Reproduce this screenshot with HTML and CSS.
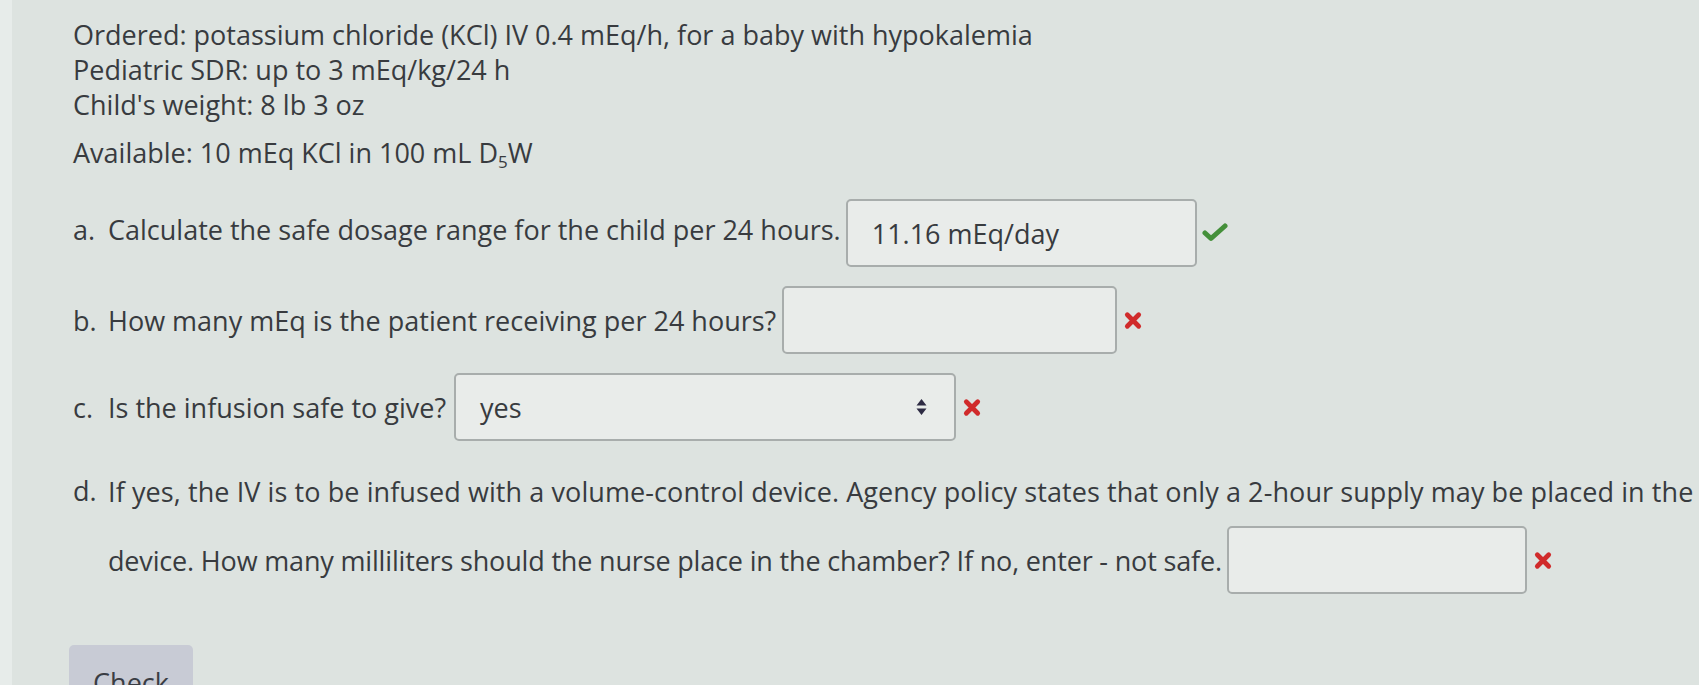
FILE: index.html
```html
<!DOCTYPE html>
<html>
<head>
<meta charset="utf-8">
<link rel="stylesheet" href="styles.css">
</head>
<body>
<div class="page">
  <div class="given">
    <p class="line">Ordered: potassium chloride (KCl) IV 0.4 mEq/h, for a baby with hypokalemia</p>
    <p class="line">Pediatric SDR: up to 3 mEq/kg/24 h</p>
    <p class="line">Child's weight: 8 lb 3 oz</p>
    <p class="line last">Available: 10 mEq KCl in 100 mL D<sub>5</sub>W</p>
  </div>
  <div class="questions">
    <div class="q qa">
      <span class="marker">a.</span>
      <span class="qtext">Calculate the safe dosage range for the child per 24 hours.</span>
      <span class="field fa">11.16 mEq/day</span>
      <svg class="icon ok" viewBox="0 0 26 20" width="26" height="20"><path d="M3 11 L9 16.5 L23 4" fill="none" stroke="#44903a" stroke-width="5" stroke-linejoin="round" stroke-linecap="round"/></svg>
    </div>
    <div class="q qb">
      <span class="marker">b.</span>
      <span class="qtext">How many mEq is the patient receiving per 24 hours?</span>
      <span class="field fb"></span>
      <svg class="icon bad" viewBox="0 0 20 20" width="20" height="19"><path d="M4 4 L16 16 M16 4 L4 16" stroke="#d02b2b" stroke-width="5" stroke-linecap="round"/></svg>
    </div>
    <div class="q qc">
      <span class="marker">c.</span>
      <span class="qtext">Is the infusion safe to give?</span>
      <span class="field select">yes
        <svg class="updown" viewBox="0 0 11 18" width="11" height="18"><path d="M5.5 1 L10.5 7.5 L0.5 7.5 Z M5.5 17 L10.5 10.5 L0.5 10.5 Z" fill="#2e2c44"/></svg>
      </span>
      <svg class="icon bad" viewBox="0 0 20 20" width="20" height="19"><path d="M4 4 L16 16 M16 4 L4 16" stroke="#d02b2b" stroke-width="5" stroke-linecap="round"/></svg>
    </div>
    <div class="q qd">
      <span class="marker">d.</span>
      <div class="dbody">
        <p class="dline1">If yes, the IV is to be infused with a volume-control device. Agency policy states that only a 2-hour supply may be placed in the</p>
        <div class="dline2">
          <span class="qtext">device. How many milliliters should the nurse place in the chamber? If no, enter - not safe.</span>
          <span class="field fd"></span>
          <svg class="icon bad" viewBox="0 0 20 20" width="20" height="19"><path d="M4 4 L16 16 M16 4 L4 16" stroke="#d02b2b" stroke-width="5" stroke-linecap="round"/></svg>
        </div>
      </div>
    </div>
  </div>
  <button class="check">Check</button>
</div>
</body>
</html>
```
FILE: styles.css
```css
html, body {
  margin: 0;
  padding: 0;
  height: 100%;
  overflow: hidden;
}
body {
  background: #dde3e0;
  font-family: "Open Sans", "Liberation Sans", sans-serif;
  color: #383b3f;
  font-size: 27px;
}
.page {
  padding: 17px 0 0 61px;
  border-left: 12px solid #e7ecea;
  min-height: 100%;
  box-sizing: border-box;
}
.given .line {
  margin: 0;
  line-height: 35px;
  white-space: nowrap;
}
.given .last { margin-top: 13px; }
sub { font-size: 17px; vertical-align: -5px; line-height: 0; }
.questions {
  margin-top: 29px;
  display: flex;
  flex-direction: column;
  gap: 19px;
}
.q {
  display: flex;
  align-items: center;
  white-space: nowrap;
}
.marker {
  width: 35px;
  flex: none;
}
.qa .qtext, .qa .marker { margin-top: -8px; }
.field {
  display: inline-flex;
  align-items: center;
  box-sizing: border-box;
  height: 68px;
  flex: none;
  background: #e9ecea;
  border: 2px solid #a8adac;
  border-radius: 5px;
  padding-left: 24px;
  margin-left: 8px;
}
.fa { width: 351px; margin-left: 5px; }
.fb { width: 335px; margin-left: 6px; }
.select { width: 502px; margin-left: 8px; justify-content: space-between; padding-right: 27px; }
.fd { width: 300px; margin-left: 5px; }
.icon { margin-left: 6px; flex: none; }
.ok { margin-left: 5px; margin-top: -2px; }
.qd { align-items: flex-start; margin-top: 12px; }
.dbody { display: flex; flex-direction: column; }
.dline1 { margin: 0; line-height: 40px; letter-spacing: 0.09px; }
.dline2 { display: flex; align-items: center; margin-top: 14px; }
.dline2 .qtext { letter-spacing: -0.17px; }
.check {
  margin-top: 51px;
  margin-left: -4px;
  width: 124px;
  height: 62px;
  border: none;
  border-radius: 5px;
  background: #c8cbd5;
  color: #3a3d44;
  font-family: "Open Sans", "Liberation Sans", sans-serif;
  font-size: 27px;
  padding: 12px 0 0 0;
  text-align: center;
  display: block;
}
```
